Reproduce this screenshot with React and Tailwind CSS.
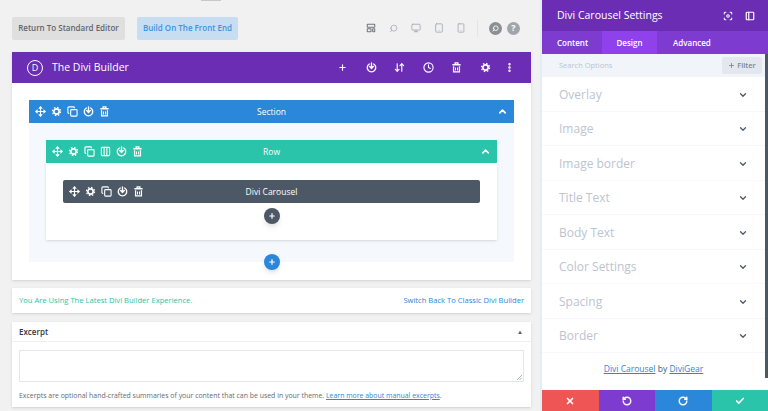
import {
  Plus,
  Copy,
  ChevronUp,
  ChevronDown,
  Move,
  Columns3,
  ArrowDownUp,
  Clock,
  EllipsisVertical,
  Search,
  Monitor,
  Tablet,
  Smartphone,
  Focus,
  PanelLeft,
  X,
  RotateCcw,
  RotateCw,
  Check,
  LayoutTemplate,
} from 'lucide-react';

const font = { fontFamily: '"Open Sans", sans-serif' };

const Portability = ({ size = 11 }) => (
  <svg width={size} height={size} viewBox="0 0 12 12" fill="none" stroke="currentColor" strokeWidth="1.5" strokeLinecap="round">
    <path d="M3.6 2.2a4.6 4.6 0 1 0 4.8 0" />
    <path d="M6 1v5.6M4 5l2 2 2-2" />
  </svg>
);

const Gear = ({ size = 11 }) => (
  <svg width={size} height={size} viewBox="0 0 12 12" fill="none" stroke="currentColor">
    <circle cx="6" cy="6" r="2.9" strokeWidth="1.8" />
    <circle cx="6" cy="6" r="4.4" strokeWidth="1.4" strokeDasharray="1.7 1.76" />
  </svg>
);

const Trash = ({ size = 11 }) => (
  <svg width={size} height={size} viewBox="0 0 12 12" fill="none" stroke="currentColor" strokeWidth="1.4">
    <path d="M1.5 3h9" strokeWidth="1.6" />
    <path d="M4.5 2.5V1h3v1.5" />
    <path d="M2.8 4.6v6.2h6.4V4.6" />
    <path d="M4.9 6v3.4M7.1 6v3.4" strokeWidth="1.1" />
  </svg>
);

const Tools = ({ columns }) => (
  <div className="flex items-center gap-[5px]">
    <Move size={11} strokeWidth={2.5} />
    <Gear />
    <Copy size={11} strokeWidth={2.4} />
    {columns && <Columns3 size={11} strokeWidth={2.4} />}
    <Portability />
    <Trash />
  </div>
);

const Bar = ({ title, className, columns, chevron = true }) => (
  <div className={`relative flex h-[23px] items-center justify-between pl-[6px] pr-[6px] text-white ${className}`}>
    <Tools columns={columns} />
    <span className="absolute inset-x-0 pt-px text-center text-[8.5px] font-medium">{title}</span>
    {chevron && <ChevronUp size={11} strokeWidth={3.5} />}
  </div>
);

const AddButton = ({ className }) => (
  <div className={`mx-auto flex h-4 w-4 items-center justify-center rounded-full text-white shadow-md ${className}`}>
    <Plus size={8} strokeWidth={3.5} />
  </div>
);

const Toggle = ({ label }) => (
  <div className="flex h-[34.5px] items-center justify-between border-b border-dotted border-[#eef1f5] pl-[17px] pr-[17px] pt-[2px]">
    <span className="text-[12px] text-[#bcc4cf]">{label}</span>
    <ChevronDown size={10} strokeWidth={3} className="text-[#4c5866]" />
  </div>
);

const App = () => {
  const toggles = ['Overlay', 'Image', 'Image border', 'Title Text', 'Body Text', 'Color Settings', 'Spacing', 'Border'];

  return (
    <div className="flex h-[411px] w-[768px] overflow-hidden bg-[#f1f1f1]" style={font}>
      <div className="w-[540px] shrink-0 pl-3 pr-[9px]">
        <div className="relative flex h-[52px] items-center pb-[7px] pt-[11px]">
          <span className="absolute left-[189px] top-0 h-px w-5 bg-[#c8c8c8]" />
          <button className="flex h-[23px] w-[113px] items-center justify-center rounded-[2px] bg-[#dfdfdf] text-[8px] font-semibold text-[#5f6670]">
            Return To Standard Editor
          </button>
          <button className="ml-3 flex h-[23px] w-[101px] items-center justify-center rounded-[2px] bg-[#c7ddf2] text-[8px] font-semibold text-[#3f93dd]">
            Build On The Front End
          </button>
          <div className="ml-auto flex items-center text-[#a3a7ac]">
            <LayoutTemplate size={10} strokeWidth={2.5} className="text-[#6f757c]" />
            <Search size={9} strokeWidth={2} className="ml-[13px] -scale-x-100" />
            <Monitor size={10} strokeWidth={2} className="ml-[13px]" />
            <Tablet size={10} strokeWidth={2} className="ml-[13px]" />
            <Smartphone size={10} strokeWidth={2} className="ml-[12px]" />
            <div className="ml-[11px] h-[17px] w-px bg-[#e4e4e4]" />
            <div className="ml-[11px] flex h-[13px] w-[13px] items-center justify-center rounded-full bg-[#8b8f94] text-white">
              <Search size={7} strokeWidth={3} className="-scale-x-100" />
            </div>
            <div className="ml-[5px] mr-[11px] flex h-[13px] w-[13px] items-center justify-center rounded-full bg-[#a1a5a9] text-[9px] font-bold text-white">
              ?
            </div>
          </div>
        </div>

        <div className="bg-white shadow-sm">
          <div className="flex h-[31px] items-center bg-[#6b2db3] pl-[15px] pr-[16px] text-white">
            <div className="flex h-4 w-4 items-center justify-center rounded-full border border-white text-[9px]">D</div>
            <span className="ml-[9px] text-[10.5px] font-medium">The Divi Builder</span>
            <div className="ml-auto flex items-center gap-[17.4px]">
              <Plus size={9} strokeWidth={3} className="mr-[1.5px]" />
              <Portability />
              <ArrowDownUp size={11} strokeWidth={2.5} />
              <Clock size={11} strokeWidth={2.4} />
              <Trash />
              <Gear />
              <EllipsisVertical size={11} strokeWidth={3.2} className="-ml-1" />
            </div>
          </div>
          <div className="h-[197px] px-[17px] pt-[17px]">
            <Bar title="Section" className="bg-[#2b87da]" />
            <div className="h-[139px] bg-[#f5f8fc] px-[17px] pt-[17px]">
              <Bar title="Row" className="bg-[#29c4a9]" columns />
              <div className="h-[77px] bg-white px-[17px] pt-[17px] shadow-sm">
                <Bar title="Divi Carousel" className="rounded-[2px] bg-[#4c5866]" chevron={false} />
                <AddButton className="mt-[5px] bg-[#4c5866]" />
              </div>
              <AddButton className="mt-[14px] bg-[#2b87da]" />
            </div>
          </div>
        </div>

        <div className="mt-2 flex h-[25px] items-center justify-between bg-white px-[7px] text-[7.6px] font-medium shadow-sm">
          <span className="text-[#29c4a9]">You Are Using The Latest Divi Builder Experience.</span>
          <span className="text-[#2b87da]">Switch Back To Classic Divi Builder</span>
        </div>

        <div className="mt-[9px] h-[85px] bg-white shadow-sm">
          <div className="flex h-[20px] items-center justify-between border-b border-[#eeeeee] pl-[7px] pr-2 pt-px">
            <span className="text-[8px] font-semibold text-[#32373c]">Excerpt</span>
            <span className="text-[6px] text-[#555d66]">▲</span>
          </div>
          <div className="relative mx-[7px] mt-2 h-[32px] border border-[#e3e7ec] bg-white">
            <svg width="5" height="5" viewBox="0 0 5 5" stroke="#8a9099" strokeWidth="0.7" className="absolute bottom-px right-px">
              <path d="M0 5 5 0M2.5 5 5 2.5" />
            </svg>
          </div>
          <p className="mx-[7px] mt-[9px] whitespace-nowrap text-[6.93px] text-[#666c73]">
            Excerpts are optional hand-crafted summaries of your content that can be used in your theme.{' '}
            <span className="text-[#2b87da] underline">Learn more about manual excerpts</span>.
          </p>
        </div>
      </div>

      <div className="flex w-[228px] shrink-0 flex-col border-l-2 border-[#e4edf6] bg-white">
        <div className="flex h-[31px] shrink-0 items-center bg-[#6b2db3] pl-[15px] pr-[13px] text-white">
          <span className="text-[10.5px] font-medium">Divi Carousel Settings</span>
          <Focus size={10} strokeWidth={2.5} className="ml-auto" />
          <PanelLeft size={10} strokeWidth={2.8} className="ml-3" />
        </div>
        <div className="flex h-[23px] shrink-0 items-center bg-[#7e3bd0] text-[8px] font-semibold text-white">
          <span className="w-[60px] pl-[15px]">Content</span>
          <span className="flex h-full w-[55px] items-center justify-center bg-[#8f42ec]">Design</span>
          <span className="pl-4">Advanced</span>
        </div>
        <div className="relative flex-1 pr-[3px]">
          <span className="absolute right-0 top-0 h-[324px] w-[3px] bg-[#4c5866]" />
          <div className="flex h-[23px] items-center justify-between bg-[#f1f5f9] pl-[17px] pr-[3px]">
            <span className="text-[7.5px] font-medium text-[#bcc4cf]">Search Options</span>
            <span className="flex h-[17px] w-10 items-center justify-center gap-[2px] rounded-[2px] bg-[#e4e8ee] text-[7.5px] font-semibold text-[#7b8794]">
              <Plus size={7} strokeWidth={3} />
              Filter
            </span>
          </div>
          {toggles.map((label) => (
            <Toggle key={label} label={label} />
          ))}
          <p className="mt-[10px] text-center text-[8.5px] text-[#4c5866]">
            <span className="text-[#2b87da] underline">Divi Carousel</span> by{' '}
            <span className="text-[#2b87da] underline">DiviGear</span>
          </p>
        </div>
        <div className="grid h-[21px] shrink-0 grid-cols-4 text-white">
          <div className="flex items-center justify-center bg-[#f05555]"><X size={10} strokeWidth={4} /></div>
          <div className="flex items-center justify-center bg-[#7e3bd0]"><RotateCcw size={10} strokeWidth={3.5} /></div>
          <div className="flex items-center justify-center bg-[#2b87da]"><RotateCw size={10} strokeWidth={3.5} /></div>
          <div className="flex items-center justify-center bg-[#29c4a9]"><Check size={10} strokeWidth={4} /></div>
        </div>
      </div>
    </div>
  );
};

export default App;
